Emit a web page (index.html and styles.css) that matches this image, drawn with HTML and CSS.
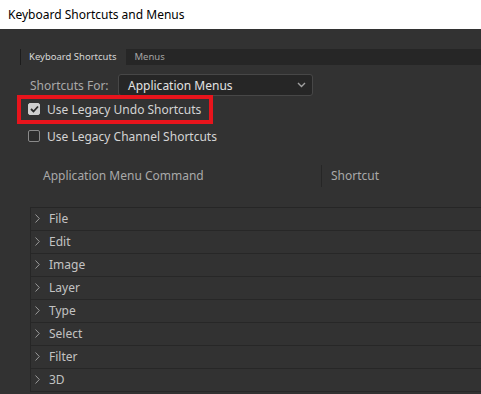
FILE: index.html
```html
<!DOCTYPE html>
<html lang="en">
<head>
<meta charset="UTF-8">
<meta name="viewport" content="width=device-width, initial-scale=1.0">
<title>Keyboard Shortcuts and Menus</title>
<link rel="stylesheet" href="styles.css">
</head>
<body>

<div class="titlebar">Keyboard Shortcuts and Menus</div>

<div class="panel">
  <div class="tabs">
    <span class="tab active">Keyboard Shortcuts</span>
    <span class="tab">Menus</span>
  </div>

  <div class="form">
    <div class="field">
      <span class="field-label">Shortcuts For:</span>
      <div class="select">
        <span>Application Menus</span>
        <svg class="select-arrow" width="9" height="6" viewBox="0 0 9 6"><polyline points="1,1 4.5,4.5 8,1" fill="none" stroke="#a0a0a0" stroke-width="1.4"/></svg>
      </div>
    </div>

    <div class="highlight">
      <label class="check">
        <span class="box checked">
          <svg width="9" height="8" viewBox="0 0 9 8"><polyline points="1,4 3.5,6.5 8,1.5" fill="none" stroke="#2a2a2a" stroke-width="1.8"/></svg>
        </span>
        Use Legacy Undo Shortcuts
      </label>
    </div>

    <label class="check">
      <span class="box"></span>
      Use Legacy Channel Shortcuts
    </label>
  </div>

  <div class="table-head">
    <span class="col-command">Application Menu Command</span>
    <span class="col-shortcut">Shortcut</span>
  </div>

  <div class="tree">
    <div class="tree-row"><svg class="caret" width="5" height="9" viewBox="0 0 5 9"><polyline points="0.5,0.5 4.3,4.5 0.5,8.5" fill="none" stroke="#9a9a9a" stroke-width="1"/></svg>File</div>
    <div class="tree-row"><svg class="caret" width="5" height="9" viewBox="0 0 5 9"><polyline points="0.5,0.5 4.3,4.5 0.5,8.5" fill="none" stroke="#9a9a9a" stroke-width="1"/></svg>Edit</div>
    <div class="tree-row"><svg class="caret" width="5" height="9" viewBox="0 0 5 9"><polyline points="0.5,0.5 4.3,4.5 0.5,8.5" fill="none" stroke="#9a9a9a" stroke-width="1"/></svg>Image</div>
    <div class="tree-row"><svg class="caret" width="5" height="9" viewBox="0 0 5 9"><polyline points="0.5,0.5 4.3,4.5 0.5,8.5" fill="none" stroke="#9a9a9a" stroke-width="1"/></svg>Layer</div>
    <div class="tree-row"><svg class="caret" width="5" height="9" viewBox="0 0 5 9"><polyline points="0.5,0.5 4.3,4.5 0.5,8.5" fill="none" stroke="#9a9a9a" stroke-width="1"/></svg>Type</div>
    <div class="tree-row"><svg class="caret" width="5" height="9" viewBox="0 0 5 9"><polyline points="0.5,0.5 4.3,4.5 0.5,8.5" fill="none" stroke="#9a9a9a" stroke-width="1"/></svg>Select</div>
    <div class="tree-row"><svg class="caret" width="5" height="9" viewBox="0 0 5 9"><polyline points="0.5,0.5 4.3,4.5 0.5,8.5" fill="none" stroke="#9a9a9a" stroke-width="1"/></svg>Filter</div>
    <div class="tree-row"><svg class="caret" width="5" height="9" viewBox="0 0 5 9"><polyline points="0.5,0.5 4.3,4.5 0.5,8.5" fill="none" stroke="#9a9a9a" stroke-width="1"/></svg>3D</div>
  </div>
</div>

</body>
</html>
```

FILE: styles.css
```css
body {
  margin: 0;
  font-family: "Noto Sans", "Open Sans", sans-serif;
  background-color: #323232;
  overflow: hidden;
}

.titlebar {
  height: 29px;
  line-height: 29px;
  padding-left: 8px;
  background-color: #fff;
  color: #000;
  font-size: 12px;
}

.panel {
  height: 365px;
  background-color: #323232;
  padding-top: 20px;
  box-sizing: border-box;
}

.tabs {
  display: flex;
  height: 16px;
  margin-left: 20px;
  background-color: #262626;
  border-left: 1px solid #1c1c1c;
}

.tab {
  font-size: 9.5px;
  line-height: 16px;
  padding: 0 10px 0 8px;
  color: #a4a4a4;
}

.tab.active {
  background-color: #323232;
  color: #d6d6d6;
}

.form {
  padding-left: 28px;
}

.field {
  display: flex;
  align-items: center;
  margin-top: 9px;
}

.field-label {
  width: 88px;
  padding-left: 2px;
  font-size: 12px;
  color: #a9a9a9;
}

.select {
  display: flex;
  align-items: center;
  justify-content: space-between;
  width: 195px;
  height: 22px;
  box-sizing: border-box;
  padding: 0 6px 0 9px;
  background-color: #262626;
  border: 1px solid #474747;
  border-radius: 3px;
  font-size: 12px;
  color: #e2e2e2;
}

.highlight {
  display: inline-flex;
  align-items: center;
  margin: -2px 0 0 -11px;
  height: 29px;
  padding: 0 8px 0 7px;
  box-sizing: border-box;
  border: 4px solid #e8141c;
}

.check {
  display: flex;
  align-items: center;
  gap: 7px;
  font-size: 12px;
  color: #d4d4d4;
}

.form > .check {
  margin-top: 4px;
}

.box {
  display: flex;
  align-items: center;
  justify-content: center;
  width: 12px;
  height: 12px;
  box-sizing: border-box;
  border: 1px solid #8a8a8a;
  border-radius: 2px;
  background-color: #2c2c2c;
}

.box.checked {
  background-color: #cfcfcf;
  border-color: #cfcfcf;
}

.table-head {
  display: flex;
  align-items: center;
  height: 22px;
  margin-top: 20px;
  font-size: 12px;
  color: #a9a9a9;
}

.col-command {
  width: 278px;
  padding-left: 43px;
}

.col-shortcut {
  border-left: 1px solid #262626;
  height: 22px;
  line-height: 22px;
  padding-left: 9px;
}

.tree {
  margin: 20px 0 0 30px;
  border-top: 1px solid #262626;
  border-left: 1px solid #262626;
}

.tree-row {
  display: flex;
  align-items: center;
  height: 22px;
  border-bottom: 1px solid #272727;
  font-size: 12px;
  color: #c3c3c3;
}

.caret {
  margin: 0 9px 0 4px;
}
```
